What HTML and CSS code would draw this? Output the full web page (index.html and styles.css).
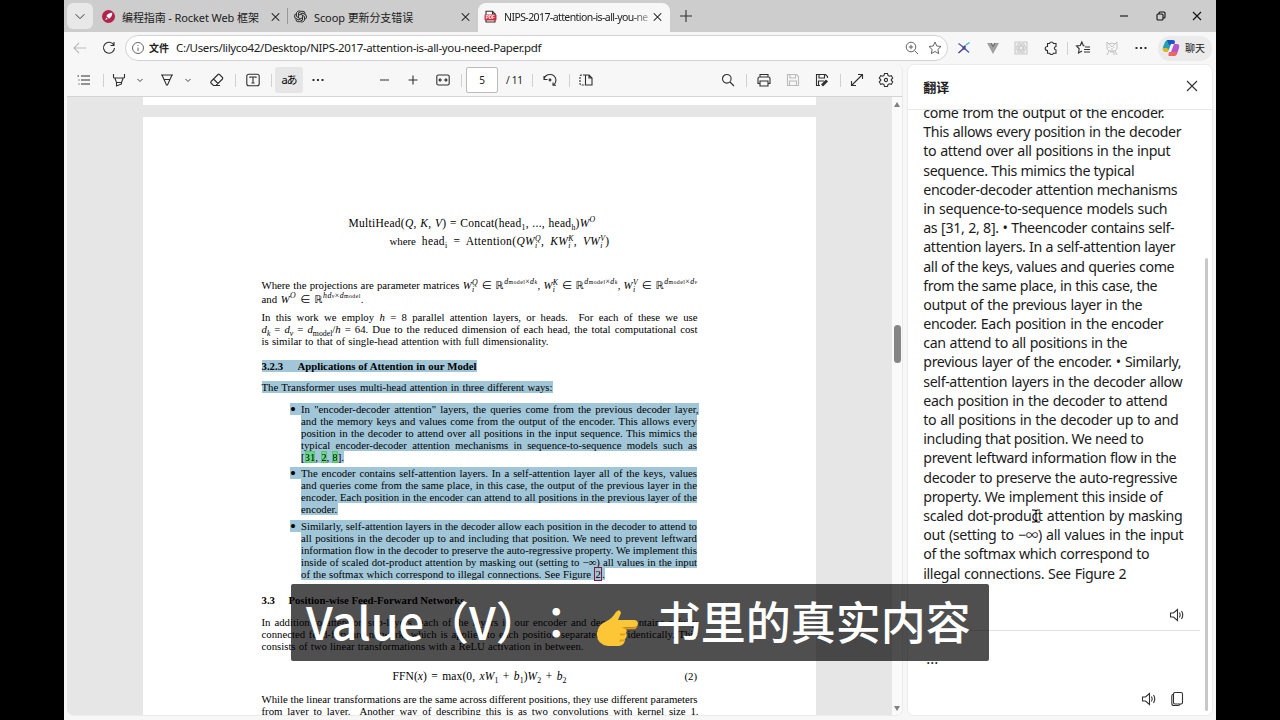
FILE: index.html
```html
<!DOCTYPE html>
<html lang="zh-CN">
<head>
  <meta charset="UTF-8">
  <meta name="viewport" content="width=device-width, initial-scale=1.0">
  <title>NIPS-2017-attention-is-all-you-need-Paper.pdf</title>
  <link rel="stylesheet" href="styles.css">
</head>
<body>

  <!-- Shared icons -->
  <svg class="sprite" aria-hidden="true">
    <symbol id="close" viewBox="0 0 16 16"><path d="M4 4l8 8M12 4l-8 8"/></symbol>
    <symbol id="chevron" viewBox="0 0 16 16"><path d="M3 6l5 5 5-5"/></symbol>
    <symbol id="dots" viewBox="0 0 16 16"><path d="M2.5 8h2M7 8h2M11.500 8h2" stroke-width="2"/></symbol>
    <symbol id="speaker" viewBox="0 0 16 16"><path d="M1.500 6v4h3L8.500 13.500v-11L4.500 6zM10.500 5.500q1.500 2.500 0 5M12.500 4q2.500 4 0 8"/></symbol>
  </svg>

  <div class="browser">
    <header class="tab-strip">
      <button class="tab-menu"><svg><use href="#chevron"/></svg></button>
      <div class="tab">
        <svg class="favicon" viewBox="0 0 12 12"><circle cx="6" cy="6" r="6" fill="#b3224a" stroke="none"/><path d="M9.500 2.500Q6 2.500 4 5.500l2.500 2.500q3-2 3-5.500zM4 7L3 9.300 5.300 8.300" fill="#fff" stroke="none"/></svg>
        <span class="tab-title">编程指南 - Rocket Web 框架</span>
        <svg><use href="#close"/></svg>
      </div>
      <div class="tab">
        <svg class="favicon" viewBox="0 0 12 12"><g stroke-width=".9"><path id="petal" d="M6 1Q3.500 0 2.300 2.600V6L6 8.200"/><use href="#petal" transform="rotate(60 6 6)"/><use href="#petal" transform="rotate(120 6 6)"/><use href="#petal" transform="rotate(180 6 6)"/><use href="#petal" transform="rotate(240 6 6)"/><use href="#petal" transform="rotate(300 6 6)"/></g></svg>
        <span class="tab-title">Scoop 更新分支错误</span>
        <svg><use href="#close"/></svg>
      </div>
      <div class="tab active">
        <svg class="favicon pdf-icon" viewBox="0 0 12 13"><path d="M1.500 5V1.200h6.500L10.500 4v8H1.500z" fill="#fff"/><path d="M8 1v3h3"/><rect x="0" y="4.500" width="12" height="6" rx="1" fill="#d22c43" stroke="none"/><text x="1.200" y="9.200">PDF</text></svg>
        <span class="tab-title fade">NIPS-2017-attention-is-all-you-ne</span>
        <svg><use href="#close"/></svg>
      </div>
      <svg class="new-tab" viewBox="0 0 16 16"><path d="M8 2v12M2 8h12"/></svg>
      <div class="window-controls">
        <svg viewBox="0 0 16 16"><path d="M4 8h8"/></svg>
        <svg viewBox="0 0 16 16"><rect x="4" y="6" width="6" height="6" rx="1"/><path d="M6 6V5q0-1 1-1h4q1 0 1 1v4q0 1-1 1h-1"/></svg>
        <svg><use href="#close"/></svg>
      </div>
    </header>

    <nav class="address-row">
      <svg class="disabled" viewBox="0 0 16 16"><path d="M14 8H2M7 3L2 8l5 5"/></svg>
      <svg viewBox="0 0 16 16"><path d="M12.800 5A5.500 5.500 0 1 0 13.500 8M13 2v3.500H9.500"/></svg>
      <div class="address-bar">
        <svg class="thin" viewBox="0 0 16 16"><circle cx="8" cy="8" r="5.500"/><path d="M8 7.500V11M8 5v1"/></svg>
        <b>文件</b>
        <span class="url">C:/Users/lilyco42/Desktop/NIPS-2017-attention-is-all-you-need-Paper.pdf</span>
        <svg class="thin zoom" viewBox="0 0 16 16"><circle cx="7" cy="7" r="4.800"/><path d="M10.500 10.500L14 14M4.800 7h4.400M7 4.800v4.400"/></svg>
        <svg class="thin" viewBox="0 0 16 16"><path d="M8 2l1.800 4 4.200.500-3.100 2.900.8 4.200L8 11.500l-3.700 2.100.8-4.200L2 6.500 6.200 6z"/></svg>
      </div>
      <svg viewBox="0 0 16 16"><path d="M2.500 3.500l4 3 6.500 6" stroke="#4a5fae" stroke-width="1.500"/><path d="M2.500 13l5-4.500L9.500 5.500" stroke="#563c91" stroke-width="1.500"/><path d="M10 5l3.500-2.500" stroke="#43b9c6" stroke-width="1.500"/><circle cx="8" cy="8" r="1.700" fill="#4d469c" stroke="none"/></svg>
      <svg viewBox="0 0 16 16"><path d="M2 3h3l3 5.500L11 3h3L8 14z" fill="#a0a0a0" stroke="none"/><path d="M5 3h2l1 2 1-2h2L8 8.500z" fill="#777" stroke="none"/></svg>
      <svg class="react" viewBox="0 0 16 16"><rect x="2" y="2" width="12" height="12" fill="#eee"/><ellipse cx="8" cy="8" rx="5" ry="2"/><ellipse cx="8" cy="8" rx="5" ry="2" transform="rotate(60 8 8)"/><ellipse cx="8" cy="8" rx="5" ry="2" transform="rotate(120 8 8)"/></svg>
      <svg viewBox="0 0 16 16"><path d="M4.500 3.500H6.500Q7 2 8.500 2T10.500 3.500H13V6.500Q11.300 6.700 11.300 8.300T13 10v3.300h-2.500Q10 14.500 8.500 14.500T6.500 13.300H4.500V10.500Q2.200 10.500 2.200 8.500T4.500 6.500z"/></svg>
      <i class="sep"></i>
      <svg viewBox="0 0 16 16"><path d="M9.500 6L8.300 5.500 6.800 2 5.300 5.500 1.500 6l2.700 2.800-.7 4.200L7 11M10 7h5M9 9.500h6M9 12h6"/></svg>
      <svg class="avatar" viewBox="0 0 16 16"><path d="M3 2l2 2q3-2 6 0l2-2v6q0 3-5 3T3 8zM5 7v1M10 7v1M7 9h2M5 11l-2 4M11 11l2 4M6 12h4v3M5 4l3 3 3-3"/></svg>
      <svg><use href="#dots"/></svg>
      <div class="chat-button">
        <svg viewBox="0 0 18 18">
          <path d="M5 1h6l-4 11H3Q0 12 1 8l2-5z" fill="#259fb6"/>
          <path d="M5 1h6q2 0 2 2l-1 3H7z" fill="#1f55c9"/>
          <path d="M1 9h4l2 2-1 2H3Q0 12 1 9z" fill="#ddb728"/>
          <path d="M13 5h2q3 0 2 4l-2 6q-1 2-3 2H7q-1 0 0-3l3-9z" fill="#b657c9"/>
          <path d="M7 13h8l-1 3q-1 1-3 1H8q-2-1-1-4z" fill="#ee6959"/>
          <path d="M9 5h3l-3 8H6z" fill="#f4f4f4"/>
        </svg>
        <span>聊天</span>
      </div>
    </nav>

    <div class="workspace">
      <section class="viewer">
        <div class="pdf-toolbar">
          <svg viewBox="0 0 16 16"><path d="M5 4h9M5 8h9M5 12h9M1.500 4h1.500M2.500 8h1M2.500 12h1"/></svg>
          <i class="sep"></i>
          <svg viewBox="0 0 16 16"><path d="M2.500 2v3q0 1 1 1h9q1 0 1-1V2M4 6.500l1.500 4h5L12 6.500M5.500 10.500V14l5-2v-1.500"/></svg>
          <svg class="small"><use href="#chevron"/></svg>
          <svg viewBox="0 0 16 16"><path d="M2 3h12M3 3l4.500 10h1L13 3M5 7.500h6"/></svg>
          <svg class="small"><use href="#chevron"/></svg>
          <svg viewBox="0 0 16 16"><path d="M2 9.500L9 2.500q.7-.7 1.500 0L13.500 5.500q.7.700 0 1.500L7 13.500H4.500L2 11q-.7-.7 0-1.500zM4.500 7L9 11.500M7 13.500h4"/></svg>
          <i class="sep"></i>
          <svg viewBox="0 0 16 16"><rect x="1.800" y="2.300" width="12.400" height="11.400" rx="2"/><path d="M5 6V5h6v1M8 5v6M6.500 11h3"/></svg>
          <i class="sep"></i>
          <button class="translate">aあ</button>
          <svg><use href="#dots"/></svg>
          <svg viewBox="0 0 16 16"><path d="M4 8h9"/></svg>
          <svg viewBox="0 0 16 16"><path d="M8 3.500v9M3.500 8h9"/></svg>
          <svg viewBox="0 0 16 16"><rect x="1.800" y="3" width="12.400" height="10" rx="1.500"/><path d="M4 8h3M9 8h3M5.500 6.500L4 8l1.500 1.500M10.500 6.500L12 8l-1.500 1.500"/></svg>
          <i class="sep"></i>
          <div class="page-number">5</div>
          <span class="page-count">/ 11</span>
          <i class="sep"></i>
          <svg viewBox="0 0 16 16"><path d="M2 7.500Q3 2.500 8 2.500T14 8Q14 11 11.500 13M2 4l0 3.500h3.500M11 10.500v2.800h3"/><circle cx="8" cy="8" r=".9"/></svg>
          <i class="sep"></i>
          <svg viewBox="0 0 16 16"><path d="M7 3H3.500Q2 3 2 4.500v7Q2 13 3.500 13H7" stroke-dasharray="2 1"/><path d="M7.500 3h3.500l3 3v7H7.500zM11 3v3h3"/></svg>
          <svg viewBox="0 0 16 16"><circle cx="6.800" cy="6.800" r="4.300"/><path d="M10 10l4 4"/></svg>
          <i class="sep"></i>
          <svg viewBox="0 0 16 16"><path d="M4 5V2.500h8V5M4 11.500H2V6.500Q2 5 3.500 5h9Q14 5 14 6.500v5h-2M4 9h8v5H4z"/></svg>
          <svg class="disabled" viewBox="0 0 16 16"><path d="M2.500 2.500h9l2 2v9h-11zM5 2.500v3.500h5.500V2.500M4.500 13.500V9h7v4.500"/></svg>
          <svg viewBox="0 0 16 16"><path d="M6 13.500H2.500v-11h9l2 2V6M5 2.500v3.500h5.500V2.500M4.500 13V9H10"/><path d="M8 13.500l5-5" stroke-width="2.800"/></svg>
          <i class="sep"></i>
          <svg viewBox="0 0 16 16"><path d="M2.500 13.500l11-11M9 2.500h4.500V7M2.500 9v4.500H7"/></svg>
          <svg viewBox="0 0 16 16"><path d="M6.500 1.500h3l.5 2 1.300.700 2-.6 1.400 2.500-1.400 1.400v1l1.400 1.400-1.400 2.500-2-.6-1.300.700-.5 2h-3l-.5-2-1.300-.7-2 .6-1.400-2.500 1.400-1.400v-1L1.300 6.100l1.400-2.500 2 .6L6 3.500z"/><circle cx="8" cy="8" r="1.600"/></svg>
        </div>

        <div class="pdf-area">
          <div class="pages">
            <div class="page previous"></div>
            <article class="page">
              <div class="line eq eq-1">MultiHead(<i>Q</i>, <i>K</i>, <i>V</i>) = Concat(head<sub>1</sub>, ..., head<sub>h</sub>)<i>W<sup>O</sup></i></div>
              <div class="line eq eq-2"><span class="where">where</span> head<sub>i</sub> = Attention(<i>QW</i><span class="ss"><i>Q</i><i>i</i></span>, <i>KW</i><span class="ss"><i>K</i><i>i</i></span>, <i>VW</i><span class="ss"><i>V</i><i>i</i></span>)</div>

              <div class="line projections">Where the projections are parameter matrices <b class="math"><i>W</i><span class="ss"><i>Q</i><i>i</i></span></b> ∈ <b class="math"><span class="real">ℝ</span><sup><i>d</i><small>model</small>×<i>d<small>k</small></i></sup></b>, <b class="math"><i>W</i><span class="ss"><i>K</i><i>i</i></span></b> ∈ <b class="math"><span class="real">ℝ</span><sup><i>d</i><small>model</small>×<i>d<small>k</small></i></sup></b>, <b class="math"><i>W</i><span class="ss"><i>V</i><i>i</i></span></b> ∈ <b class="math"><span class="real">ℝ</span><sup><i>d</i><small>model</small>×<i>d<small>v</small></i></sup></b></div>
              <div class="line projections-2">and <b class="math"><i>W<sup>O</sup></i></b> ∈ <b class="math"><span class="real">ℝ</span><sup><i>hd<small>v</small></i>×<i>d</i><small>model</small></sup></b>.</div>

              <div class="para work">
                <div class="line">In this work we employ <i>h</i> = 8 parallel attention layers, or heads.&nbsp; For each of these we use</div>
                <div class="line"><i>d<sub>k</sub></i> = <i>d<sub>v</sub></i> = <i>d</i><sub>model</sub>/<i>h</i> = 64. Due to the reduced dimension of each head, the total computational cost</div>
                <div class="line w-287">is similar to that of single-head attention with full dimensionality.</div>
              </div>

              <h3 class="line selected w-215">3.2.3&nbsp;&nbsp;&nbsp;&nbsp; Applications of Attention in our Model</h3>
              <div class="line selected intro">The Transformer uses multi-head attention in three different ways:</div>

              <ul>
                <li>
                  <div class="line selected w-397">In "encoder-decoder attention" layers, the queries come from the previous decoder layer,</div>
                  <div class="line selected">and the memory keys and values come from the output of the encoder. This allows every</div>
                  <div class="line selected">position in the decoder to attend over all positions in the input sequence. This mimics the</div>
                  <div class="line selected">typical encoder-decoder attention mechanisms in sequence-to-sequence models such as</div>
                  <div class="line selected w-43">[<mark>31</mark>, <mark>2</mark>, <mark>8</mark>].</div>
                </li>
                <li>
                  <div class="line selected">The encoder contains self-attention layers. In a self-attention layer all of the keys, values</div>
                  <div class="line selected">and queries come from the same place, in this case, the output of the previous layer in the</div>
                  <div class="line selected">encoder. Each position in the encoder can attend to all positions in the previous layer of the</div>
                  <div class="line selected w-37">encoder.</div>
                </li>
                <li>
                  <div class="line selected">Similarly, self-attention layers in the decoder allow each position in the decoder to attend to</div>
                  <div class="line selected">all positions in the decoder up to and including that position. We need to prevent leftward</div>
                  <div class="line selected">information flow in the decoder to preserve the auto-regressive property. We implement this</div>
                  <div class="line selected">inside of scaled dot-product attention by masking out (setting to −∞) all values in the input</div>
                  <div class="line selected w-304">of the softmax which correspond to illegal connections. See Figure <span class="figure-link">2</span>.</div>
                </li>
              </ul>

              <h3 class="line w-203">3.3&nbsp;&nbsp;&nbsp;&nbsp; Position-wise Feed-Forward Networks</h3>
              <div class="para addition">
                <div class="line">In addition to attention sub-layers, each of the layers in our encoder and decoder contains a fully</div>
                <div class="line">connected feed-forward network, which is applied to each position separately and identically. This</div>
                <div class="line w-322">consists of two linear transformations with a ReLU activation in between.</div>
              </div>
              <div class="ffn"><div class="line eq w-174">FFN(<i>x</i>) = max(0, <i>xW</i><sub>1</sub> + <i>b</i><sub>1</sub>)<i>W</i><sub>2</sub> + <i>b</i><sub>2</sub></div><span>(2)</span></div>
              <div class="para">
                <div class="line tight">While the linear transformations are the same across different positions, they use different parameters</div>
                <div class="line w-437">from layer to layer.&nbsp; Another way of describing this is as two convolutions with kernel size 1.</div>
              </div>
            </article>
          </div>
          <div class="scrollbar"><i class="up"></i><i class="thumb"></i><i class="down"></i></div>
        </div>
      </section>

      <aside class="translator">
        <div class="translator-head"><h2>翻译</h2><svg viewBox="0 0 16 16"><path d="M3 3l10 10M13 3L3 13"/></svg></div>
        <div class="translator-body">
          <div class="source-text">
            <p>come from the output of the encoder.</p>
            <p>This allows every position in the decoder</p>
            <p>to attend over all positions in the input</p>
            <p>sequence. This mimics the typical</p>
            <p>encoder-decoder attention mechanisms</p>
            <p>in sequence-to-sequence models such</p>
            <p>as [31, 2, 8]. • Theencoder contains self-</p>
            <p>attention layers. In a self-attention layer</p>
            <p>all of the keys, values and queries come</p>
            <p>from the same place, in this case, the</p>
            <p>output of the previous layer in the</p>
            <p>encoder. Each position in the encoder</p>
            <p>can attend to all positions in the</p>
            <p>previous layer of the encoder. • Similarly,</p>
            <p>self-attention layers in the decoder allow</p>
            <p>each position in the decoder to attend</p>
            <p>to all positions in the decoder up to and</p>
            <p>including that position. We need to</p>
            <p>prevent leftward information flow in the</p>
            <p>decoder to preserve the auto-regressive</p>
            <p>property. We implement this inside of</p>
            <p>scaled dot-product attention by masking</p>
            <p>out (setting to −<span class="infinity">∞</span>) all values in the input</p>
            <p>of the softmax which correspond to</p>
            <p>illegal connections. See Figure 2</p>
          </div>
          <div class="actions"><svg><use href="#speaker"/></svg></div>
          <div class="result">...</div>
          <div class="actions"><svg><use href="#speaker"/></svg><svg viewBox="0 0 16 16"><rect x="4.500" y="1.500" width="9" height="11.500" rx="1.500"/><path d="M4.500 3Q2.800 3 2.800 5v7.500q0 2 2 2H9q2 0 2-1.500"/></svg></div>
        </div>
        <i class="panel-thumb"></i>
      </aside>
    </div>

    <svg class="cursor" viewBox="0 0 10 16"><path d="M1 2h3l1 1 1-1h3M5 2v12M1 14h3l1-1 1 1h3"/></svg>

    <div class="caption">
      <span>Value（V）<span class="colon">：</span></span>
      <svg viewBox="0 0 42 36"><path d="M20 2q4-4 5 1l-3 7h16q4 0 4 3.500T38 17H28q4 2 2 6 2 3-1 6 0 6-6 7H12Q0 34 1 23 2 15 9 12q7-3 11-10z" fill="#fcc636"/><path d="M25 17.300h13q3 0 4-3-1 5-4 5h-9M24 23.500h6q-1 2-3 2h-3M24 29.500h5q-1 2-3 2h-3" fill="#e49b20"/></svg>
      <span>书里的真实内容</span>
    </div>
  </div>

</body>
</html>
```
FILE: styles.css
```css
* {
  margin: 0;
  padding: 0;
  box-sizing: border-box;
}

body {
  width: 1280px;
  height: 720px;
  overflow: hidden;
  background: #000;
  color: #202020;
  font-family: 'Noto Sans', 'Noto Sans CJK SC', sans-serif;
  font-size: 11.5px;
}

svg {
  width: 16px;
  height: 16px;
  flex: none;
  fill: none;
  stroke: #303030;
  stroke-width: 1.1;
}

button {
  border: 0;
  font: inherit;
}

.sprite {
  position: absolute;
  width: 0;
  height: 0;
}

.browser {
  position: relative;
  width: 1152px;
  height: 720px;
  margin: 0 auto;
  background: #f7f7f7;
  overflow: hidden;
}

/* Tabs */
.tab-strip {
  display: flex;
  align-items: center;
  height: 32px;
  padding-left: 3px;
  background: #cdcdcd;
}

.tab-menu {
  display: flex;
  align-items: center;
  justify-content: center;
  width: 26px;
  height: 26px;
  margin-right: 3px;
  border-radius: 6px;
  background: #e8e8e8;
}

.tab-menu svg {
  width: 14px;
}

.tab {
  display: flex;
  align-items: center;
  width: 192px;
  height: 29px;
  margin-top: 3px;
  padding: 0 5px 2px 6px;
}

.tab + .tab {
  position: relative;
  width: 190px;
}

.tab:nth-child(3)::before {
  content: '';
  position: absolute;
  left: -1px;
  top: 5px;
  width: 1px;
  height: 16px;
  background: #999;
}

.tab .favicon {
  width: 13px;
  height: 13px;
  margin-right: 7px;
}

.tab.active {
  width: 192px;
  background: #f7f7f7;
  border-radius: 8px 8px 0 0;
}

.pdf-icon text {
  font: bold 4.500px 'Liberation Sans', sans-serif;
  fill: #fff;
  stroke: none;
}

.tab-title {
  flex: 1;
  overflow: hidden;
  white-space: nowrap;
  font-size: 11px;
  letter-spacing: -0.1px;
}

.fade {
  flex: none;
  width: 146px;
  font-size: 10.500px;
  letter-spacing: -0.58px;
  mask-image: linear-gradient(90deg, #000 88%, rgba(0, 0, 0, 0.2));
}

.tab > svg:last-child {
  width: 15px;
  margin-left: auto;
  stroke: #111;
}

.new-tab {
  margin-left: 8px;
}

.window-controls {
  display: flex;
  gap: 20.500px;
  margin-left: auto;
  padding-right: 11px;
}

.window-controls svg {
  stroke: #111;
}

/* Address row */
.address-row {
  display: grid;
  grid-template-columns: 29px 24px 831px 29px 28px 30px 24px 8px 29px 29px 25px 54px;
  align-items: center;
  height: 32px;
  padding-left: 8px;
}

.disabled {
  stroke: #bbb;
}

.thin {
  stroke: #555;
  stroke-width: 0.9;
}

.address-bar {
  display: flex;
  align-items: center;
  width: 823px;
  height: 26px;
  padding: 0 4px;
  border: 1px solid #d2d2d2;
  border-radius: 13px;
  background: #fff;
}

.address-bar b {
  width: 27px;
  margin: -1px 0 0 3px;
  font-size: 10px;
  color: #222;
}

.url {
  margin-top: -1px;
  letter-spacing: -0.35px;
}

.zoom {
  margin: 0 7px 0 auto;
}

.sep {
  width: 1px;
  height: 13px;
  background: #d0d0d0;
}

.react {
  stroke: #ccc;
}

.avatar {
  stroke: #aaa;
  stroke-width: 0.7;
}

.chat-button {
  display: flex;
  align-items: center;
  gap: 5px;
  width: 54px;
  height: 25px;
  padding-left: 4px;
  border-radius: 12px;
  background: #ebebeb;
  font-size: 10px;
}

.chat-button span {
  margin-top: -2px;
}

.chat-button svg {
  width: 18px;
  height: 18px;
  stroke: none;
}

/* PDF viewer */
.workspace {
  display: flex;
  gap: 4px;
  height: 652px;
  padding: 0 3px;
}

.viewer {
  width: 837px;
  border-radius: 7px;
  border: 1px solid #ebebeb;
  border-width: 0 1px 1px 0;
  overflow: hidden;
}

.pdf-toolbar {
  display: grid;
  grid-template-columns: 27px 8px 25px 23px 25px 25px 26px 10px 26px 4px 35px 66px 29px 30px 26px 5px 40px 26px 10px 27px 9px 142px 26px 10px 29px 29px 26px 9px 29px 16px;
  align-items: center;
  height: 33px;
  padding-left: 9px;
  border-bottom: 1px solid #d4d4d4;
}

.pdf-toolbar .small {
  width: 8px;
  height: 8px;
  stroke-width: 1.8;
}

.translate {
  width: 28px;
  height: 26px;
  padding-bottom: 2px;
  border-radius: 3px;
  background: #e6e6e6;
  font-size: 11px;
  letter-spacing: -1px;
  white-space: nowrap;
}

.page-number {
  width: 32px;
  height: 26px;
  border: 1px solid #bbb;
  border-radius: 2px;
  background: #fff;
  line-height: 25px;
  text-align: center;
  font-size: 10px;
}

.page-count {
  font-size: 10px;
  letter-spacing: -0.3px;
  white-space: nowrap;
}

.pdf-area {
  display: flex;
  height: 619px;
}

.pages {
  width: 826px;
  background: #e6e6e6;
}

.page {
  width: 673px;
  height: 599px;
  margin: 12px 0 0 76px;
  padding: 100px 119px 0 118.500px;
  overflow: hidden;
  background: #fff;
  color: #000;
  font-family: 'Liberation Serif', 'Noto Sans CJK SC', serif;
  font-size: 10.750px;
}

.page.previous {
  height: 8px;
  margin-top: 0;
  padding: 0;
}

.line {
  width: 436px;
  height: 12px;
  line-height: 12px;
  font-size: 10.750px;
  white-space: nowrap;
  text-align: justify;
  text-align-last: justify;
}

.line.tight {
  letter-spacing: -0.02px;
}

.line sub,
.line sup {
  font-size: 7.800px;
  line-height: 0;
}

.line small {
  font-size: 5.800px;
}

.line.eq {
  font-size: 11.500px;
  letter-spacing: 0.1px;
}

.math {
  font-weight: normal;
  letter-spacing: 0.45px;
}

.ss {
  display: inline-flex;
  flex-direction: column;
  height: 14px;
  vertical-align: 4px;
  font-size: 7.800px;
  line-height: 7px;
  margin-bottom: -12px;
  text-align-last: left;
}

.where {
  font-size: 10.800px;
  letter-spacing: 0;
}

.real {
  font-family: 'DejaVu Sans', sans-serif;
  font-size: 10.500px;
  line-height: 0;
}

.eq-1.line {
  width: 247px;
  margin-left: 87px;
  letter-spacing: 0.28px;
}

.eq-2.line {
  width: 220px;
  margin: 6px 0 32px 128px;
  letter-spacing: 0.35px;
}

.projections-2 {
  width: 102px;
  margin-top: 2px;
}

.work {
  margin: 6px 0 13px;
}

.selected {
  background: #a1c6d8;
}

.intro {
  width: 291px;
  margin: 8.500px 0 10.500px;
}

.w-437.line { width: 437px; }
.w-397.line { width: 397.500px; }
.w-322.line { width: 322px; }
.w-304.line { width: 304px; }
.w-287.line { width: 287px; }
.w-215.line { width: 215px; }
.w-203.line { width: 203px; }
.w-174.line { width: 174px; }
.w-43.line { width: 43px; }
.w-37.line { width: 37px; }

ul {
  margin: 0 0 14.500px 39.500px;
  list-style: none;
}

li {
  position: relative;
  margin-bottom: 4.300px;
}

li .line {
  width: 396px;
}

/* The selection also covers the bullet */
li::before {
  content: '•';
  position: absolute;
  left: -11px;
  top: 0;
  width: 11px;
  height: 12px;
  background: #a1c6d8;
  font-size: 17px;
  line-height: 14px;
}

mark {
  background: #6bd885;
  outline: 1px solid #55c677;
  outline-offset: -1px;
}

.figure-link {
  border: solid #8c1240;
  border-width: 1px;
  padding: 0 0.500px;
}

.addition {
  margin: 10px 0 18px;
}

.ffn {
  display: flex;
  justify-content: space-between;
  height: 12px;
  margin-bottom: 10.500px;
  padding-left: 131px;
  line-height: 12px;
}

.scrollbar {
  display: flex;
  flex-direction: column;
  align-items: center;
  width: 10px;
  padding: 5px 0 5px;
  background: #fafafa;
}

.scrollbar .up,
.scrollbar .down {
  border: 3.500px solid transparent;
  border-top: 0;
  border-bottom: 5px solid #808080;
}

.scrollbar .down {
  margin-top: auto;
  border-top: 5px solid #808080;
  border-bottom: 0;
}

.scrollbar .thumb {
  width: 7px;
  height: 38px;
  margin-top: 218px;
  border-radius: 4px;
  background: #858585;
}

/* Translation panel */
.translator {
  position: relative;
  width: 306px;
  border: 1px solid #ececec;
  border-radius: 7px;
  background: #fff;
  overflow: hidden;
}

.translator-head {
  display: flex;
  align-items: center;
  justify-content: space-between;
  height: 45px;
  padding: 0 12px 2px 15px;
  border-bottom: 1px solid #e8e8e8;
}

.translator-head h2 {
  font-size: 13px;
}

.translator-body {
  padding: 0 15px;
}

.source-text {
  height: 498px;
  overflow: hidden;
  margin-top: -1px;
  font-size: 14.200px;
  line-height: 19.200px;
  letter-spacing: -0.36px;
  color: #1b1b1b;
}

.source-text p {
  height: 19.200px;
  white-space: nowrap;
  text-align-last: justify;
}

.source-text p:first-child {
  margin-top: -6px;
}

.infinity {
  font-size: 12.500px;
  line-height: 0;
}

.source-text p:nth-child(1) { width: 241px; }
.source-text p:nth-child(2) { width: 258px; }
.source-text p:nth-child(3) { width: 247px; }
.source-text p:nth-child(4) { width: 211px; }
.source-text p:nth-child(5) { width: 254px; }
.source-text p:nth-child(6) { width: 244px; }
.source-text p:nth-child(7) { width: 251px; }
.source-text p:nth-child(8) { width: 252px; }
.source-text p:nth-child(9) { width: 251px; }
.source-text p:nth-child(10) { width: 234px; }
.source-text p:nth-child(11) { width: 219px; }
.source-text p:nth-child(12) { width: 240px; }
.source-text p:nth-child(13) { width: 204px; }
.source-text p:nth-child(14) { width: 258px; }
.source-text p:nth-child(15) { width: 259px; }
.source-text p:nth-child(16) { width: 244px; }
.source-text p:nth-child(17) { width: 255px; }
.source-text p:nth-child(18) { width: 202px; }
.source-text p:nth-child(19) { width: 253px; }
.source-text p:nth-child(20) { width: 254px; }
.source-text p:nth-child(21) { width: 239px; }
.source-text p:nth-child(22) { width: 259px; }
.source-text p:nth-child(23) { width: 260px; }
.source-text p:nth-child(24) { width: 226px; }
.source-text p:nth-child(25) { width: 203px; }

.actions {
  display: flex;
  justify-content: flex-end;
  gap: 12px;
  height: 16px;
  padding-right: 12px;
}

.result {
  height: 61px;
  margin: 7px -3px 0 0;
  border-top: 1px solid #e2e2e2;
  padding: 17px 0 0 3px;
  font-size: 15px;
}

.panel-thumb {
  position: absolute;
  right: 4px;
  top: 193px;
  width: 3px;
  height: 453px;
  border-radius: 2px;
  background: #c8c8c8;
}

.cursor {
  position: absolute;
  left: 967px;
  top: 508px;
  width: 10px;
  stroke: #000;
}

/* Subtitle over the window */
.caption {
  position: absolute;
  left: 227px;
  top: 584px;
  display: flex;
  align-items: center;
  width: 698px;
  height: 77px;
  padding-left: 15px;
  border-radius: 2px;
  background: rgba(0, 0, 0, 0.69);
  color: #fff;
  font-family: 'Noto Sans CJK SC', sans-serif;
  font-size: 45px;
  font-weight: 500;
  line-height: 72px;
  text-spacing-trim: space-all;
  white-space: nowrap;
}

.caption > span {
  margin-top: -4px;
}

.colon {
  margin-left: -7px;
  font-family: 'Noto Sans CJK TC', sans-serif;
}

.caption svg {
  width: 42px;
  height: 36px;
  margin: 10px 18px 0 17px;
  stroke: none;
}
```
